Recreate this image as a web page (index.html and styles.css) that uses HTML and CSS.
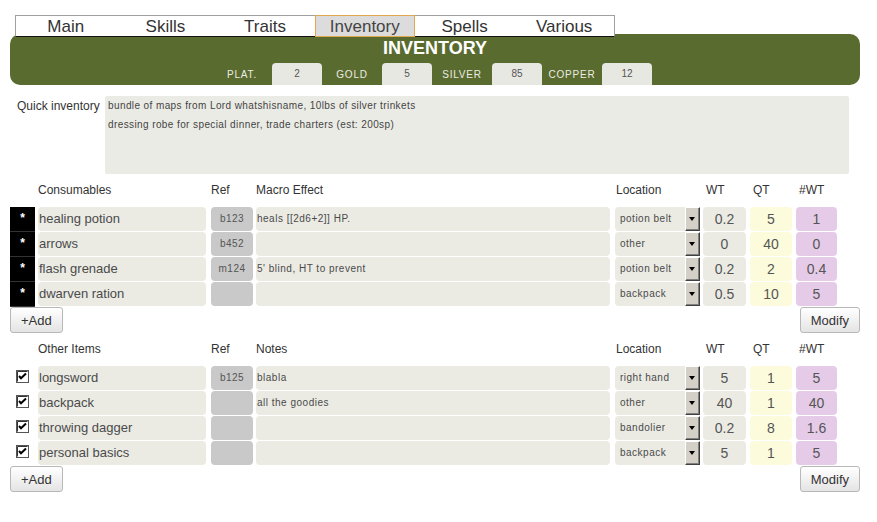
FILE: index.html
```html
<!DOCTYPE html>
<html>
<head>
<meta charset="utf-8">
<title>Inventory</title>
<link rel="stylesheet" href="styles.css">
</head>
<body>
<div class="page">
  <nav class="tabs">
    <div class="tab">Main</div>
    <div class="tab">Skills</div>
    <div class="tab">Traits</div>
    <div class="tab active">Inventory</div>
    <div class="tab">Spells</div>
    <div class="tab">Various</div>
  </nav>

  <header class="banner">
    <h1 class="title">INVENTORY</h1>
    <div class="coins">
      <span class="coin-label">PLAT.</span><span class="coin-box">2</span>
      <span class="coin-label">GOLD</span><span class="coin-box">5</span>
      <span class="coin-label">SILVER</span><span class="coin-box">85</span>
      <span class="coin-label">COPPER</span><span class="coin-box">12</span>
    </div>
  </header>

  <section class="quick">
    <div class="quick-label">Quick inventory</div>
    <div class="quick-box">bundle of maps from Lord whatshisname, 10lbs of silver trinkets<br>dressing robe for special dinner, trade charters (est: 200sp)</div>
  </section>

  <section class="items">
    <div class="row head">
      <div class="mark"></div>
      <div class="name">Consumables</div>
      <div class="ref">Ref</div>
      <div class="note">Macro Effect</div>
      <div class="loc">Location</div>
      <div class="wt">WT</div>
      <div class="qt">QT</div>
      <div class="tot">#WT</div>
    </div>

    <div class="row">
      <div class="mark star">*</div>
      <div class="name field">healing potion</div>
      <div class="ref field">b123</div>
      <div class="note field">heals [[2d6+2]] HP.</div>
      <div class="loc field"><span class="loc-text">potion belt</span><span class="drop"></span></div>
      <div class="wt field">0.2</div>
      <div class="qt field">5</div>
      <div class="tot field">1</div>
    </div>
    <div class="row">
      <div class="mark star">*</div>
      <div class="name field">arrows</div>
      <div class="ref field">b452</div>
      <div class="note field"></div>
      <div class="loc field"><span class="loc-text">other</span><span class="drop"></span></div>
      <div class="wt field">0</div>
      <div class="qt field">40</div>
      <div class="tot field">0</div>
    </div>
    <div class="row">
      <div class="mark star">*</div>
      <div class="name field">flash grenade</div>
      <div class="ref field">m124</div>
      <div class="note field">5' blind, HT to prevent</div>
      <div class="loc field"><span class="loc-text">potion belt</span><span class="drop"></span></div>
      <div class="wt field">0.2</div>
      <div class="qt field">2</div>
      <div class="tot field">0.4</div>
    </div>
    <div class="row">
      <div class="mark star">*</div>
      <div class="name field">dwarven ration</div>
      <div class="ref field"></div>
      <div class="note field"></div>
      <div class="loc field"><span class="loc-text">backpack</span><span class="drop"></span></div>
      <div class="wt field">0.5</div>
      <div class="qt field">10</div>
      <div class="tot field">5</div>
    </div>

    <div class="actions">
      <button class="btn">+Add</button>
      <button class="btn">Modify</button>
    </div>
  </section>

  <section class="items">
    <div class="row head">
      <div class="mark"></div>
      <div class="name">Other Items</div>
      <div class="ref">Ref</div>
      <div class="note">Notes</div>
      <div class="loc">Location</div>
      <div class="wt">WT</div>
      <div class="qt">QT</div>
      <div class="tot">#WT</div>
    </div>

    <div class="row">
      <div class="mark check"><svg class="cb" width="13" height="13" viewBox="0 0 13 13"><rect x="0.5" y="0.5" width="12" height="12" fill="#fff" stroke="#555"/><path d="M1.5 1.5H11.5M1.5 1.5V11.5" stroke="#333" fill="none"/><path d="M3 6l2 2.2L10 3.5" stroke="#000" stroke-width="2" fill="none"/></svg></div>
      <div class="name field">longsword</div>
      <div class="ref field">b125</div>
      <div class="note field">blabla</div>
      <div class="loc field"><span class="loc-text">right hand</span><span class="drop"></span></div>
      <div class="wt field">5</div>
      <div class="qt field">1</div>
      <div class="tot field">5</div>
    </div>
    <div class="row">
      <div class="mark check"><svg class="cb" width="13" height="13" viewBox="0 0 13 13"><rect x="0.5" y="0.5" width="12" height="12" fill="#fff" stroke="#555"/><path d="M1.5 1.5H11.5M1.5 1.5V11.5" stroke="#333" fill="none"/><path d="M3 6l2 2.2L10 3.5" stroke="#000" stroke-width="2" fill="none"/></svg></div>
      <div class="name field">backpack</div>
      <div class="ref field"></div>
      <div class="note field">all the goodies</div>
      <div class="loc field"><span class="loc-text">other</span><span class="drop"></span></div>
      <div class="wt field">40</div>
      <div class="qt field">1</div>
      <div class="tot field">40</div>
    </div>
    <div class="row">
      <div class="mark check"><svg class="cb" width="13" height="13" viewBox="0 0 13 13"><rect x="0.5" y="0.5" width="12" height="12" fill="#fff" stroke="#555"/><path d="M1.5 1.5H11.5M1.5 1.5V11.5" stroke="#333" fill="none"/><path d="M3 6l2 2.2L10 3.5" stroke="#000" stroke-width="2" fill="none"/></svg></div>
      <div class="name field">throwing dagger</div>
      <div class="ref field"></div>
      <div class="note field"></div>
      <div class="loc field"><span class="loc-text">bandolier</span><span class="drop"></span></div>
      <div class="wt field">0.2</div>
      <div class="qt field">8</div>
      <div class="tot field">1.6</div>
    </div>
    <div class="row">
      <div class="mark check"><svg class="cb" width="13" height="13" viewBox="0 0 13 13"><rect x="0.5" y="0.5" width="12" height="12" fill="#fff" stroke="#555"/><path d="M1.5 1.5H11.5M1.5 1.5V11.5" stroke="#333" fill="none"/><path d="M3 6l2 2.2L10 3.5" stroke="#000" stroke-width="2" fill="none"/></svg></div>
      <div class="name field">personal basics</div>
      <div class="ref field"></div>
      <div class="note field"></div>
      <div class="loc field"><span class="loc-text">backpack</span><span class="drop"></span></div>
      <div class="wt field">5</div>
      <div class="qt field">1</div>
      <div class="tot field">5</div>
    </div>

    <div class="actions">
      <button class="btn">+Add</button>
      <button class="btn">Modify</button>
    </div>
  </section>
</div>
</body>
</html>
```

FILE: styles.css
```css
html, body {
  margin: 0;
  padding: 0;
  background: #fff;
}

body {
  font-family: "Liberation Sans", Arial, sans-serif;
  color: #333;
}

.page {
  width: 850px;
  margin-left: 10px;
  padding-top: 15px;
}

/* Tabs */
.tabs {
  position: relative;
  z-index: 1;
  display: flex;
  width: 598px;
  height: 20px;
  margin-left: 5px;
  margin-bottom: -3px;
  background: #fff;
  border: 1px solid #a0a0a0;
  border-bottom: 1px solid #111;
}

.tab {
  flex: 1;
  text-align: center;
  font-size: 17px;
  line-height: 22px;
  color: #333;
}

.tab.active {
  flex: 0 0 98px;
  margin: -1px 0 -1px 0;
  background: #dcdcdc;
  border: 1px solid #e2a850;
  line-height: 22px;
  color: #444;
}

/* Green banner */
.banner {
  background: #5a6b2f;
  border-radius: 10px;
  padding-top: 4px;
  height: 47px;
}

.title {
  margin: 0;
  font-size: 18px;
  font-weight: bold;
  line-height: 20px;
  color: #fff;
  text-align: center;
}

.coins {
  display: flex;
  justify-content: center;
  align-items: center;
  margin-top: 5px;
  padding-right: 6px;
}

.coin-label {
  width: 60px;
  text-align: center;
  font-size: 10px;
  letter-spacing: 0.8px;
  color: #ecece4;
}

.coin-box {
  width: 50px;
  height: 22px;
  line-height: 22px;
  background: #e8e8e2;
  border-radius: 4px 4px 0 0;
  text-align: center;
  font-size: 10px;
  color: #555;
}

/* Quick inventory */
.quick {
  display: flex;
  margin-top: 11px;
}

.quick-label {
  width: 88px;
  padding-left: 7px;
  padding-top: 3px;
  font-size: 12px;
  color: #333;
}

.quick-box {
  width: 741px;
  height: 78px;
  padding-left: 3px;
  background: #ebebe5;
  border-radius: 2px;
  font-size: 10px;
  letter-spacing: 0.4px;
  line-height: 19px;
  color: #444;
}

/* Item tables */
.items {
  margin-top: 8px;
}

.row {
  display: flex;
  height: 24px;
  margin-bottom: 1px;
}

.row.head {
  height: 16px;
  margin-bottom: 9px;
  font-size: 12px;
  line-height: 16px;
  color: #333;
}

.mark { width: 25px; flex: none; }
.name { width: 168px; margin-left: 3px; flex: none; }
.ref  { width: 42px;  margin-left: 5px; flex: none; }
.note { width: 354px; margin-left: 3px; flex: none; }
.loc  { width: 85px;  margin-left: 5px; flex: none; }
.wt   { width: 43px;  margin-left: 3px; flex: none; }
.qt   { width: 42px;  margin-left: 4px; flex: none; }
.tot  { width: 41px;  margin-left: 4px; flex: none; }

.head .loc { padding-left: 1px; }
.head .wt { padding-left: 2px; }

.field {
  box-sizing: border-box;
  background: #ebebe4;
  border-radius: 4px;
  line-height: 24px;
  color: #4a4a4a;
  overflow: hidden;
  white-space: nowrap;
}

.name.field {
  padding-left: 1px;
  font-size: 13px;
}

.ref.field {
  background: #c9c9c9;
  text-align: center;
  font-size: 10px;
  letter-spacing: 0.5px;
  color: #555;
}

.note.field {
  padding-left: 1px;
  font-size: 10px;
  letter-spacing: 0.5px;
}

.loc.field {
  display: flex;
  align-items: center;
  border-radius: 4px 0 0 4px;
  font-size: 10px;
  letter-spacing: 0.5px;
}

.loc-text {
  flex: 1;
  padding-left: 5px;
}

.drop {
  position: relative;
  box-sizing: border-box;
  width: 15px;
  height: 24px;
  background: #d4d0c8;
  border-top: 1px solid #fff;
  border-left: 1px solid #fff;
  border-right: 1px solid #404040;
  border-bottom: 1px solid #404040;
  box-shadow: inset -1px -1px 0 #808080;
}

.drop::after {
  content: "";
  position: absolute;
  left: 3px;
  top: 9px;
  border-left: 3.5px solid transparent;
  border-right: 3.5px solid transparent;
  border-top: 4px solid #000;
}

.wt.field, .qt.field, .tot.field {
  text-align: center;
  font-size: 14px;
  color: #555;
}

.qt.field { background: #fcfcdc; }
.tot.field { background: #e6cbe8; }

.mark.star {
  align-self: flex-start;
  box-sizing: border-box;
  height: 25px;
  margin-bottom: -1px;
  background: #000;
  border-bottom: 1px solid #333;
  color: #fff;
  text-align: center;
  font-size: 12px;
  font-weight: bold;
  line-height: 22px;
}

.mark.check {
  box-sizing: border-box;
  padding-left: 6px;
  padding-top: 4px;
}

.cb { display: block; }

.actions {
  display: flex;
  justify-content: space-between;
  margin-top: 1px;
}

.btn {
  height: 26px;
  padding: 0 10px;
  font-family: "Liberation Sans", Arial, sans-serif;
  font-size: 13px;
  color: #333;
  background: linear-gradient(#ffffff, #e4e4e4);
  border: 1px solid #b8b8b8;
  border-radius: 3px;
}
```
